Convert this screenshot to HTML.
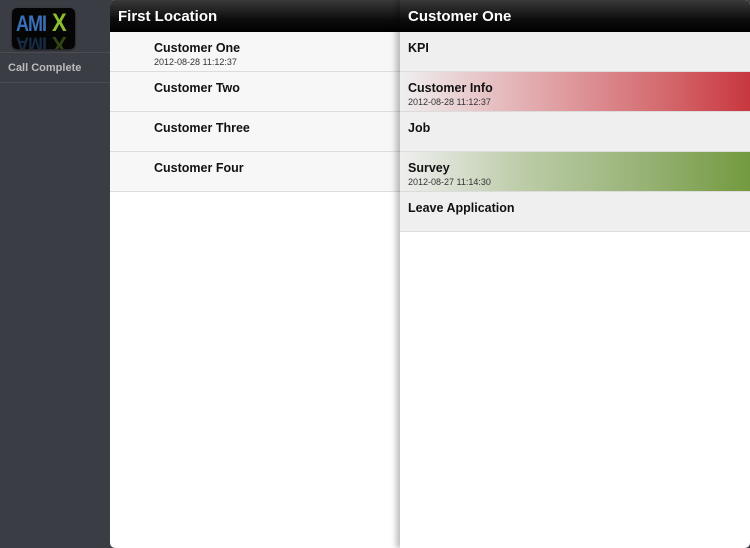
<!DOCTYPE html>
<html><head><meta charset="utf-8"><style>
*{margin:0;padding:0;box-sizing:border-box}
body{width:750px;height:548px;overflow:hidden;background:#3b3d44;font-family:"Liberation Sans",sans-serif;position:relative}
.side{position:absolute;left:0;top:0;width:110px;height:548px;background:#3b3d44}
.logo{position:absolute;left:12px;top:8px;width:63px;height:41px;background:#050505;border-radius:5px;box-shadow:0 1px 2px rgba(0,0,0,.6);overflow:hidden}
.logo span{position:absolute;font-weight:bold;font-size:18px;letter-spacing:-1px;transform-origin:0 0}
.sep{position:absolute;left:0;width:110px;height:1px;background:#2c2d32;border-bottom:1px solid #4a4c53}
.cc{position:absolute;left:8px;top:62px;color:#b9bbc0;font-size:11px;font-weight:bold}
.panel{position:absolute;top:0;height:548px;background:#fff}
.hdr{height:32px;background:linear-gradient(#3a3a3a,#0d0d0d 60%,#000);color:#fff;font-weight:bold;font-size:15px;padding:8px 0 0 8px}
.row{height:40px;border-bottom:1px solid #dcdcdc;padding:9px 0 0 0;position:relative}
.t{font-weight:bold;font-size:12.5px;color:#111}
.d{font-size:9px;color:#333;margin-top:2px}
</style></head><body>
<div class="side">
<div class="logo">
<span style="left:4px;top:3px;color:#3a6fb8;transform:scaleY(1.25)">AMI</span>
<span style="left:40px;top:0px;color:#8bbf32;font-size:22px;transform:scaleY(1.15)">X</span>
<span style="left:4px;top:47px;color:#1d3556;transform:scaleY(-1.1);opacity:.8">AMI</span>
<span style="left:40px;top:49px;color:#3b5516;font-size:22px;transform:scaleY(-1);opacity:.8">X</span>
</div>
<div class="sep" style="top:52px"></div>
<div class="cc">Call Complete</div>
<div class="sep" style="top:82px"></div>
</div>
<div class="panel" style="left:110px;width:292px;border-radius:5px 0 0 5px;overflow:hidden">
<div class="hdr">First Location</div>
<div style="background:#f7f7f7">
<div class="row" style="padding-left:44px"><div class="t">Customer One</div><div class="d">2012-08-28 11:12:37</div></div>
<div class="row" style="padding-left:44px"><div class="t">Customer Two</div></div>
<div class="row" style="padding-left:44px"><div class="t">Customer Three</div></div>
<div class="row" style="padding-left:44px"><div class="t">Customer Four</div></div>
</div>
</div>
<div class="panel" style="left:400px;width:350px;border-radius:0 5px 5px 0;overflow:hidden;box-shadow:-4px 0 6px rgba(0,0,0,.25)">
<div class="hdr">Customer One</div>
<div class="row" style="padding-left:8px;background:#efefef"><div class="t">KPI</div></div>
<div class="row" style="padding-left:8px;background:linear-gradient(90deg,#efefef,#e2a7ab 40%,#d46a6e 75%,#c8373f)"><div class="t">Customer Info</div><div class="d">2012-08-28 11:12:37</div></div>
<div class="row" style="padding-left:8px;background:#efefef"><div class="t">Job</div></div>
<div class="row" style="padding-left:8px;background:linear-gradient(90deg,#efefef,#bccca8 35%,#97b275 70%,#739a3f)"><div class="t">Survey</div><div class="d">2012-08-27 11:14:30</div></div>
<div class="row" style="padding-left:8px;background:#efefef"><div class="t">Leave Application</div></div>
</div>
</body></html>
